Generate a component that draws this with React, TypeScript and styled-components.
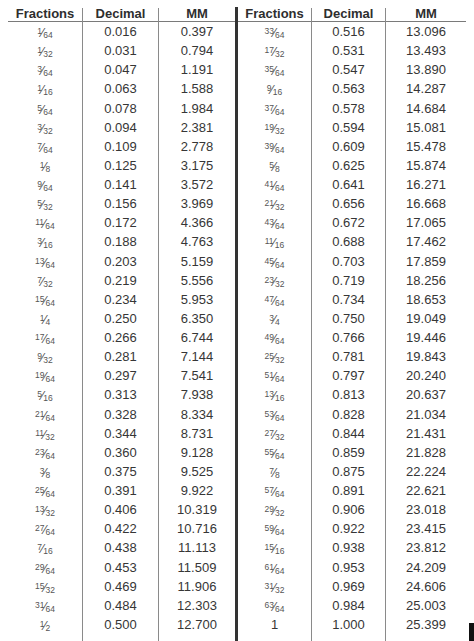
import {ReactNode} from 'react'
import styled, {createGlobalStyle} from 'styled-components'

const leftDecimals = [
  '0.016', '0.031', '0.047', '0.063', '0.078', '0.094', '0.109', '0.125',
  '0.141', '0.156', '0.172', '0.188', '0.203', '0.219', '0.234', '0.250',
  '0.266', '0.281', '0.297', '0.313', '0.328', '0.344', '0.360', '0.375',
  '0.391', '0.406', '0.422', '0.438', '0.453', '0.469', '0.484', '0.500',
]
const leftMm = [
  '0.397', '0.794', '1.191', '1.588', '1.984', '2.381', '2.778', '3.175',
  '3.572', '3.969', '4.366', '4.763', '5.159', '5.556', '5.953', '6.350',
  '6.744', '7.144', '7.541', '7.938', '8.334', '8.731', '9.128', '9.525',
  '9.922', '10.319', '10.716', '11.113', '11.509', '11.906', '12.303', '12.700',
]
const rightDecimals = [
  '0.516', '0.531', '0.547', '0.563', '0.578', '0.594', '0.609', '0.625',
  '0.641', '0.656', '0.672', '0.688', '0.703', '0.719', '0.734', '0.750',
  '0.766', '0.781', '0.797', '0.813', '0.828', '0.844', '0.859', '0.875',
  '0.891', '0.906', '0.922', '0.938', '0.953', '0.969', '0.984', '1.000',
]
const rightMm = [
  '13.096', '13.493', '13.890', '14.287', '14.684', '15.081', '15.478', '15.874',
  '16.271', '16.668', '17.065', '17.462', '17.859', '18.256', '18.653', '19.049',
  '19.446', '19.843', '20.240', '20.637', '21.034', '21.431', '21.828', '22.224',
  '22.621', '23.018', '23.415', '23.812', '24.209', '24.606', '25.003', '25.399',
]

// n/64 reduced to lowest terms
const reduce = (n: number): [number, number] => {
  let num = n
  let den = 64
  while (num % 2 === 0 && den > 1) {
    num /= 2
    den /= 2
  }
  return [num, den]
}

const Fraction = ({n}: {n: number}) => {
  const [num, den] = reduce(n)
  if (den === 1) return <Whole>{num}</Whole>
  return (
    <Frac>
      <Num>{num}</Num>
      <Slash>⁄</Slash>
      <Den>{den}</Den>
    </Frac>
  )
}

type HalfProps = {
  start: number
  decimals: string[]
  mm: string[]
  widths: [number, number, number]
}

const Half = ({start, decimals, mm, widths}: HalfProps) => (
  <HalfWrap>
    <Column $width={widths[0]} $divided>
      <HeaderCell>Fractions</HeaderCell>
      {decimals.map((_, i) => (
        <Cell key={i}>
          <Fraction n={start + i} />
        </Cell>
      ))}
    </Column>
    <Column $width={widths[1]} $divided>
      <HeaderCell>Decimal</HeaderCell>
      {decimals.map((d) => (
        <Cell key={d}>{d}</Cell>
      ))}
    </Column>
    <Column $width={widths[2]}>
      <HeaderCell>MM</HeaderCell>
      {mm.map((m) => (
        <Cell key={m}>{m}</Cell>
      ))}
    </Column>
  </HalfWrap>
)

const Page = ({children}: {children: ReactNode}) => <Sheet>{children}</Sheet>

export default function App() {
  return (
    <>
      <GlobalStyle />
      <Page>
        <Half start={1} decimals={leftDecimals} mm={leftMm} widths={[75, 76, 76]} />
        <Divider />
        <Half start={33} decimals={rightDecimals} mm={rightMm} widths={[74, 74, 80]} />
        <Marker />
      </Page>
    </>
  )
}

const GlobalStyle = createGlobalStyle`
  html, body {
    margin: 0;
    padding: 0;
    background: #ffffff;
  }
  body {
    font-family: "Liberation Sans", Arial, sans-serif;
    overflow: hidden;
  }
`
const Sheet = styled.div`
  display: flex;
  align-items: stretch;
  height: 641px;
  box-sizing: border-box;
  padding: 8px 0 0 8px;
`
const HalfWrap = styled.div`
  display: flex;
  align-items: stretch;
`
const Column = styled.div<{$width: number; $divided?: boolean}>`
  display: flex;
  flex-direction: column;
  box-sizing: border-box;
  width: ${(p) => p.$width}px;
  border-right: ${(p) => (p.$divided ? '1px solid #8a8a8a' : 'none')};
`
const HeaderCell = styled.div`
  height: 13px;
  line-height: 11px;
  border-bottom: 1px solid #7a7a7a;
  text-align: center;
  font-size: 13px;
  font-weight: 700;
  color: #2e2e2e;
  white-space: nowrap;
`
const Cell = styled.div`
  height: 19.13px;
  line-height: 19.13px;
  text-align: center;
  font-size: 13px;
  color: #363636;
  white-space: nowrap;
`
const Divider = styled.div`
  width: 3px;
  margin-top: -1px;
  background: #333333;
`
const Marker = styled.div`
  align-self: flex-end;
  width: 5px;
  height: 18px;
  margin-left: 3px;
  background: #111111;
`
const Frac = styled.span`
  color: #555555;
  display: inline-block;
`
const Num = styled.span`
  font-size: 8.5px;
  vertical-align: 3px;
`
const Slash = styled.span`
  font-size: 13px;
  margin: 0 -0.5px 0 -0.5px;
`
const Den = styled.span`
  font-size: 8.5px;
  vertical-align: -1px;
`
const Whole = styled.span`
  color: #363636;
`
